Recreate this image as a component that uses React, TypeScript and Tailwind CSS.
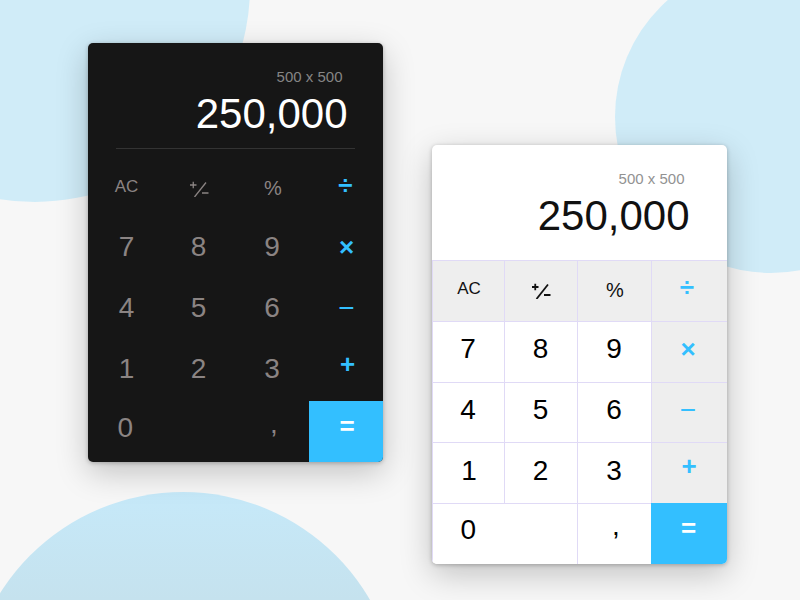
import clsx from "clsx";

type Theme = "dark" | "light";

interface Key {
  id: string;
  label: string;
  kind: "digit" | "fn" | "op" | "equals";
  className: string;
}

const keys: Key[] = [
  { id: "clear", label: "AC", kind: "fn", className: "text-[17px] pb-1 pl-0.5" },
  { id: "sign", label: "±", kind: "fn", className: "pb-0" },
  { id: "percent", label: "%", kind: "fn", className: "text-[20px] pb-0.5 pl-0.5" },
  { id: "divide", label: "÷", kind: "op", className: "text-[26px] font-bold pb-2 pr-1" },
  { id: "7", label: "7", kind: "digit", className: "text-[28px] pb-1.5" },
  { id: "8", label: "8", kind: "digit", className: "text-[28px] pb-1.5" },
  { id: "9", label: "9", kind: "digit", className: "text-[28px] pb-1.5" },
  { id: "multiply", label: "×", kind: "op", className: "text-[26px] font-bold pb-1.5 pr-0.5" },
  { id: "4", label: "4", kind: "digit", className: "text-[28px] pb-1" },
  { id: "5", label: "5", kind: "digit", className: "text-[28px] pb-1" },
  { id: "6", label: "6", kind: "digit", className: "text-[28px] pb-1" },
  { id: "subtract", label: "−", kind: "op", className: "text-[28px] pb-1 pr-0.5" },
  { id: "1", label: "1", kind: "digit", className: "text-[28px] pb-1 pl-0.5" },
  { id: "2", label: "2", kind: "digit", className: "text-[28px] pb-1" },
  { id: "3", label: "3", kind: "digit", className: "text-[28px] pb-1" },
  { id: "add", label: "+", kind: "op", className: "text-[26px] font-bold pb-3.5" },
  { id: "0", label: "0", kind: "digit", className: "text-[28px] col-span-2 pb-2" },
  { id: "comma", label: ",", kind: "digit", className: "text-[28px] pb-4 pl-1" },
  { id: "equals", label: "=", kind: "equals", className: "text-[26px] font-bold pb-3" },
];

const firstColumn = ["clear", "7", "4", "1"];
const lastColumn = ["divide", "multiply", "subtract", "add", "equals"];

function SignIcon({ theme }: { theme: Theme }) {
  return (
    <svg
      viewBox="0 0 20 16"
      className="h-4 w-5"
      fill="none"
      stroke="currentColor"
      strokeWidth={theme === "dark" ? 1.3 : 1.8}
      aria-hidden="true"
    >
      <path d="M1 4h6.5M4.25 0.75v6.5M13 12h6.5" />
      <path d="M5.5 16L17 1.5" />
    </svg>
  );
}

function Calculator({ theme }: { theme: Theme }) {
  const dark = theme === "dark";

  const keyColors = (kind: Key["kind"]) => {
    if (kind === "equals") return "bg-[#33bfff] text-white";
    if (kind === "op") return clsx("text-[#33bfff]", !dark && "bg-[#eeeeee]");
    if (dark) return "text-[#8b8483]";
    return kind === "fn" ? "bg-[#eeeeee] text-[#111111]" : "bg-white text-black";
  };

  return (
    <section
      aria-label={dark ? "Dark calculator" : "Light calculator"}
      className={clsx(
        "w-[295px] shrink-0 overflow-hidden rounded-[5px] shadow-[0_1px_4px_rgba(0,0,0,0.25),0_10px_32px_rgba(0,0,0,0.22)]",
        dark ? "bg-[#161616]" : "mt-[102px] bg-white"
      )}
    >
      <header
        className={clsx(
          "flex h-[115px] flex-col pt-6 pl-7 text-right",
          dark ? "pr-7" : "pr-[30px]"
        )}
      >
        <p
          className={clsx(
            "pr-3 text-[15px] leading-5",
            dark ? "text-[#858585]" : "text-[#929292]"
          )}
        >
          500 x 500
        </p>
        <output
          className={clsx(
            "block pr-[7px] text-[42px] leading-[54px]",
            dark ? "text-white" : "text-[#111111]"
          )}
        >
          250,000
        </output>
        {dark && <hr className="mt-[7px] border-[#333333]" />}
      </header>
      <div
        className={clsx(
          "grid h-[304px] grid-rows-5",
          dark
            ? "grid-cols-[74fr_73fr_74fr_74fr]"
            : "grid-cols-[72fr_73fr_74fr_76fr]"
        )}
      >
        {keys.map((key) => (
          <button
            key={key.id}
            type="button"
            aria-label={key.id === "sign" ? "plus or minus" : undefined}
            className={clsx(
              "flex items-center leading-none",
              key.id !== "0" && "justify-center",
              key.id === "0" && (dark ? "pl-[29px]" : "pl-7"),
              key.kind !== "equals" &&
                (dark
                  ? "border-t border-l border-transparent"
                  : "border-t border-l border-[#e0daf6]"),
              dark &&
                (firstColumn.includes(key.id) || lastColumn.includes(key.id)) &&
                "pl-[3px]",
              keyColors(key.kind),
              key.className
            )}
          >
            {key.id === "sign" ? <SignIcon theme={theme} /> : key.label}
          </button>
        ))}
      </div>
    </section>
  );
}

export default function App() {
  return (
    <main className="relative isolate flex min-h-screen items-start justify-center gap-[49px] overflow-hidden bg-[#f7f7f7] pt-[43px] pb-9 pl-[14px] font-['Liberation_Sans',Arial,sans-serif]">
      {/* background bubbles */}
      <div className="absolute -top-[228px] -left-[180px] -z-10 size-[430px] rounded-full bg-[#d0ecf8]" />
      <div className="absolute -top-[39px] -right-[127px] -z-10 size-[312px] rounded-full bg-[#d0ecf8]" />
      <div className="absolute -bottom-[324px] -left-[33px] -z-10 size-[432px] rounded-full bg-linear-to-b from-[#c6e9f9] to-[#c5e2ee] to-25%" />

      <Calculator theme="dark" />
      <Calculator theme="light" />
    </main>
  );
}
